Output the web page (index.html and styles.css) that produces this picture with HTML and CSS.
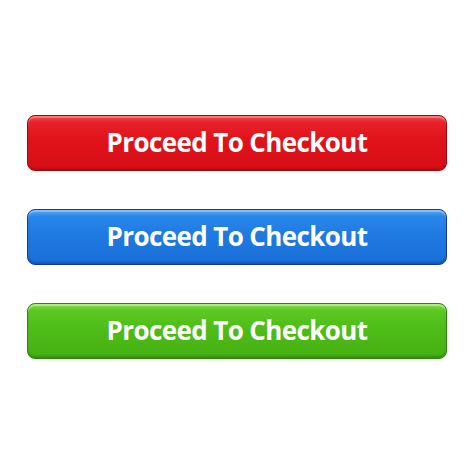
FILE: index.html
```html
<!DOCTYPE html>
<html lang="en">
<head>
    <meta charset="UTF-8">
    <meta name="viewport" content="width=device-width, initial-scale=1.0">
    <title>Checkout Buttons</title>
    <link rel="stylesheet" href="styles.css">
</head>
<body>
    <div class="buttons">
        <!-- Botões de checkout em três cores -->
        <button class="btn btn-red">Proceed To Checkout</button>
        <button class="btn btn-blue">Proceed To Checkout</button>
        <button class="btn btn-green">Proceed To Checkout</button>
    </div>
</body>
</html>
```

FILE: styles.css
```css
body {
    background: #fff;
    margin: 0;
    padding: 0;
    font-family: "Open Sans", Arial, sans-serif;
}

.buttons {
    display: flex;
    flex-direction: column;
    gap: 38px;
    padding: 115px 0 0 27px;
}

.btn {
    box-sizing: border-box;
    width: 420px;
    height: 56px;
    border-radius: 8px;
    border: 1.5px solid;
    color: #fff;
    font-family: inherit;
    font-weight: 700;
    font-size: 26px;
    letter-spacing: -0.6px;
    padding: 0 0 3px 0;
    cursor: pointer;
}

.btn-red {
    background: linear-gradient(to bottom, #f04a4e 0%, #e8212a 12%, #e0121a 45%, #d60e16 100%);
    border-color: #a0070d;
    box-shadow: inset 0 2px 1px rgba(255, 160, 160, 0.6), inset 0 -2px 2px rgba(150, 0, 0, 0.35);
}

.btn-blue {
    background: linear-gradient(to bottom, #5aa6f2 0%, #2a87ea 12%, #1e7ae2 45%, #1a6fd8 100%);
    border-color: #1a389a;
    box-shadow: inset 0 2px 1px rgba(170, 215, 255, 0.6), inset 0 -2px 2px rgba(10, 40, 130, 0.35);
}

.btn-green {
    background: linear-gradient(to bottom, #86dc50 0%, #5cc824 12%, #4ebd18 45%, #45b012 100%);
    border-color: #2c850c;
    box-shadow: inset 0 2px 1px rgba(200, 255, 170, 0.6), inset 0 -2px 2px rgba(20, 90, 0, 0.35);
}
```
